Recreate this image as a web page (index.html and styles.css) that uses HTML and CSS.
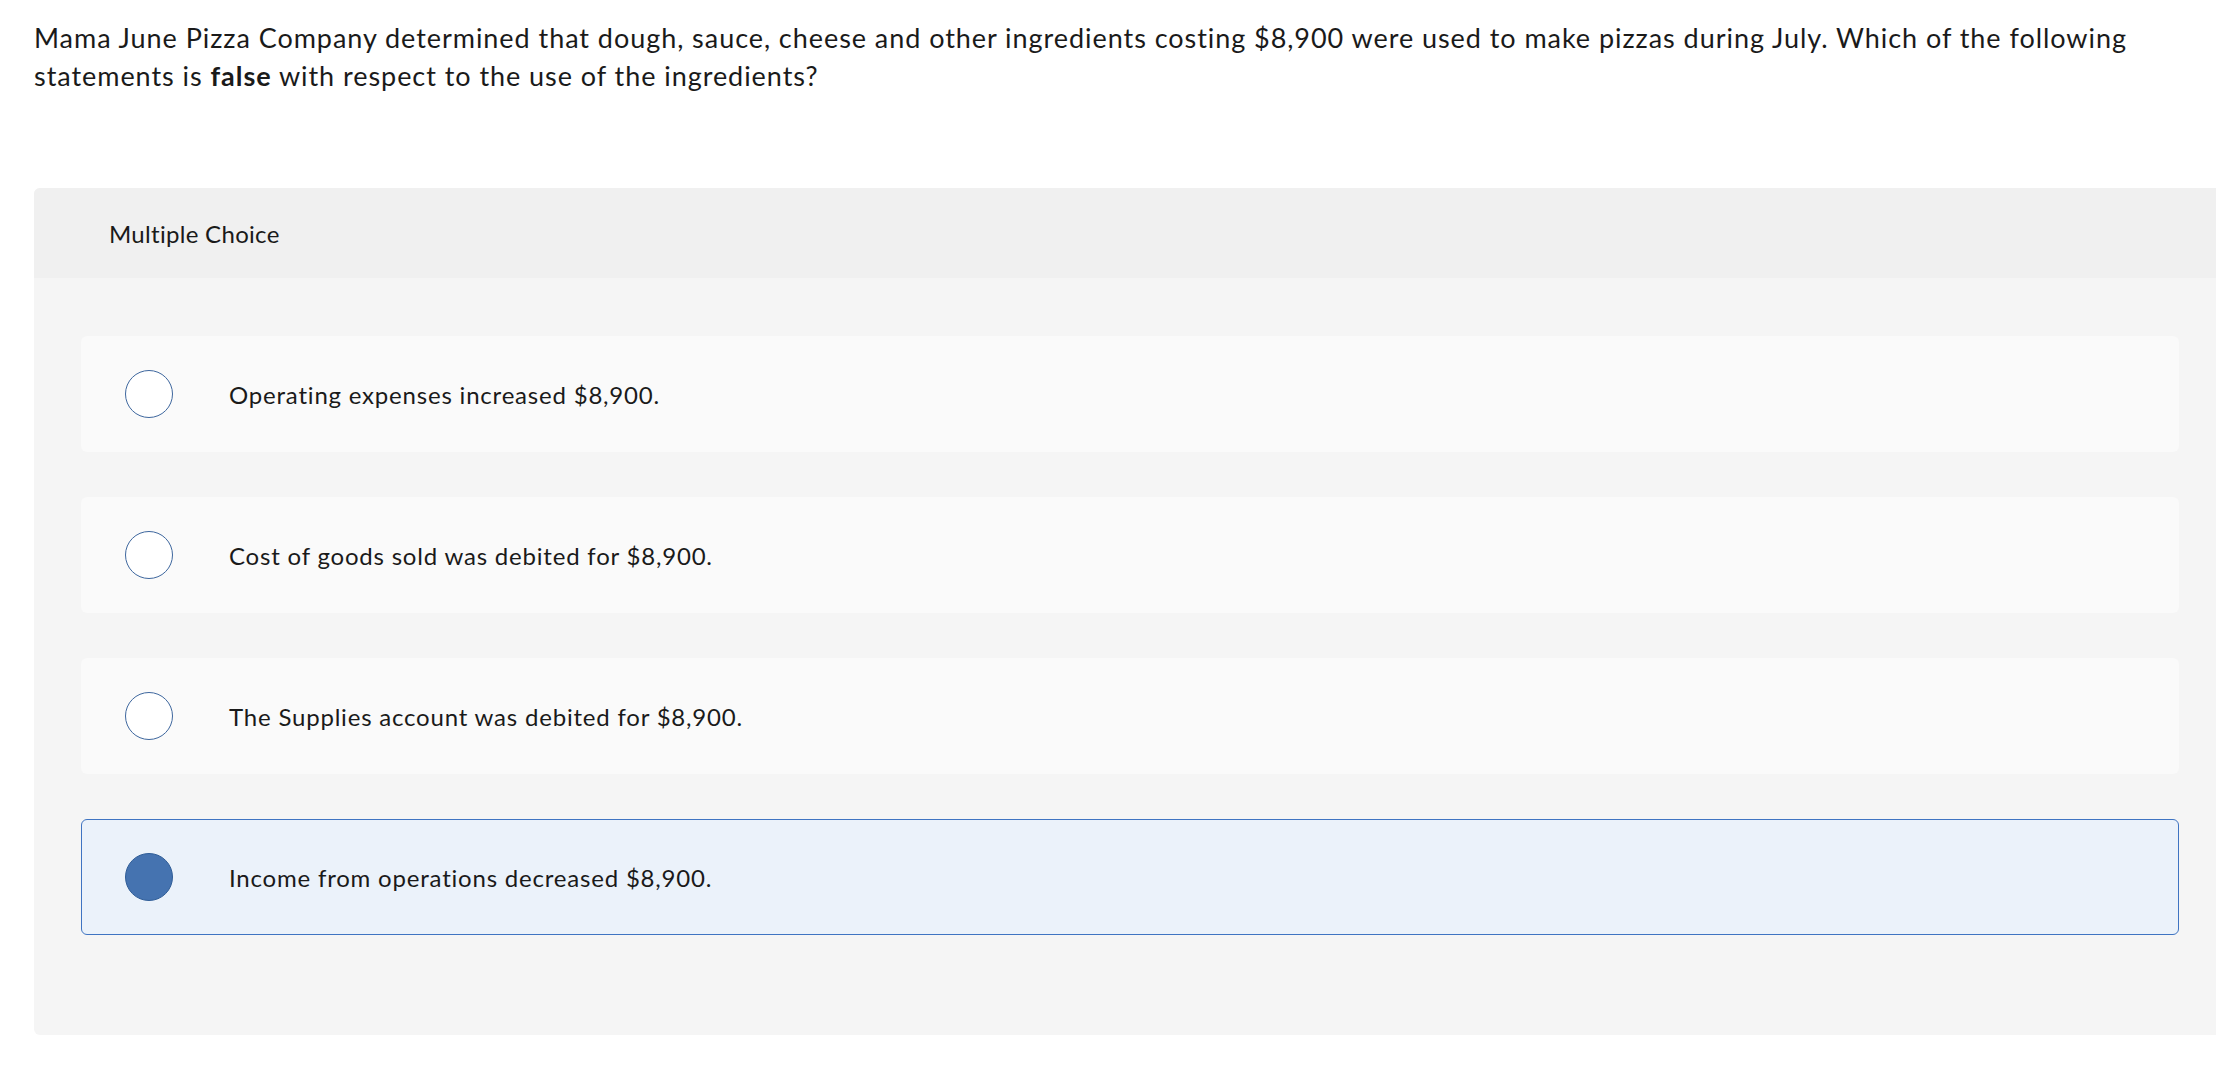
FILE: index.html
```html
<!DOCTYPE html>
<html>
<head>
<meta charset="utf-8">
<link rel="stylesheet" href="styles.css">
</head>
<body>
<div class="page">
  <p class="question">Mama June Pizza Company determined that dough, sauce, cheese and other ingredients costing $8,900 were used to make pizzas during July. Which of the following statements is <b>false</b> with respect to the use of the ingredients?</p>
  <section class="mc">
    <div class="mc-head">Multiple Choice</div>
    <div class="mc-body">
      <div class="opt"><span class="radio"></span><span class="label">Operating expenses increased $8,900.</span></div>
      <div class="opt"><span class="radio"></span><span class="label">Cost of goods sold was debited for $8,900.</span></div>
      <div class="opt"><span class="radio"></span><span class="label">The Supplies account was debited for $8,900.</span></div>
      <div class="opt selected"><span class="radio"></span><span class="label">Income from operations decreased $8,900.</span></div>
    </div>
  </section>
</div>
</body>
</html>
```
FILE: styles.css
```css
html, body {
  margin: 0;
  padding: 0;
  background: #ffffff;
}
body {
  font-family: Lato, "Open Sans", "Liberation Sans", sans-serif;
  color: #1a1a1a;
  overflow: hidden;
}
.page {
  padding: 19px 0 0 34px;
}
.question {
  margin: 0;
  font-size: 27px;
  line-height: 38px;
  letter-spacing: 0.95px;
  max-width: 2150px;
}
.question b {
  font-weight: 700;
}
.mc {
  margin-top: 93px;
  width: calc(100% + 20px);
  background: #f5f5f5;
  border-radius: 6px 0 0 6px;
  overflow: hidden;
}
.mc-head {
  height: 90px;
  background: #f0f0f0;
  display: flex;
  align-items: center;
  padding-left: 75px;
  font-size: 24px;
  letter-spacing: 0.3px;
}
.mc-body {
  padding: 58px 57px 100px 47px;
  display: flex;
  flex-direction: column;
  gap: 45px;
}
.opt {
  height: 116px;
  box-sizing: border-box;
  background: #fafafa;
  border: 1px solid transparent;
  border-radius: 6px;
  display: flex;
  align-items: center;
  padding-left: 43px;
  font-size: 24px;
  letter-spacing: 0.8px;
}
.radio {
  width: 48px;
  height: 48px;
  box-sizing: border-box;
  border-radius: 50%;
  border: 1.5px solid #3e679e;
  background: #ffffff;
  flex: none;
}
.label {
  margin-left: 56px;
}
.opt.selected {
  background: #ebf2fa;
  border-color: #3f74c2;
}
.opt.selected .radio {
  background: #4573b0;
  border-color: #2f5d97;
}
```
